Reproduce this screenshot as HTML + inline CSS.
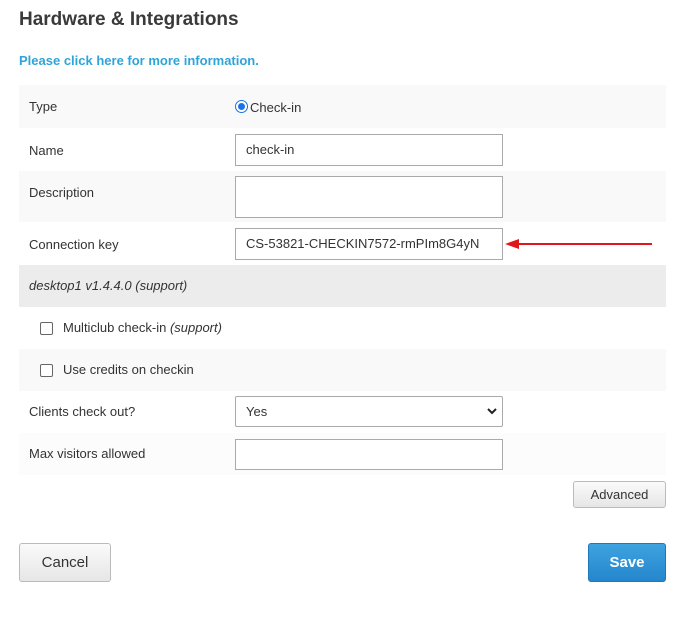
<!DOCTYPE html>
<html><head><style>
body{margin:0;background:#fff;font-family:"Liberation Sans",sans-serif;color:#333;width:689px;height:618px;position:relative;overflow:hidden}
.a{position:absolute}
h1{position:absolute;left:19px;top:9px;margin:0;font-size:19px;font-weight:bold;color:#3a3a3a}
.link{left:19px;top:53px;font-size:13px;font-weight:bold;color:#2fa4d9}
.row{position:absolute;left:19px;width:647px}
.lbl{position:absolute;left:10px;font-size:13px;color:#333}
.inp{position:absolute;left:216px;width:268px;border:1px solid #aaa;background:#fff;box-sizing:border-box;font-size:13px;padding-left:10px;color:#333}
.cb{position:absolute;left:21px;width:11px;height:11px;border:1px solid #666;border-radius:2px;background:#fff}
.btn{position:absolute;border:1px solid #bbb;border-radius:3px;background:linear-gradient(#fafafa,#e6e6e6);font-size:14px;text-align:center;box-sizing:border-box;color:#333}
</style></head><body>
<h1>Hardware &amp; Integrations</h1>
<div class="a link">Please click here for more information.</div>

<div class="row" style="top:85px;height:43px;background:#f9f9f9">
 <div class="lbl" style="top:14px">Type</div>
 <div class="a" style="left:216px;top:15px;width:11px;height:11px;border:1px solid #1a73e8;border-radius:50%;background:#fff"><div class="a" style="left:2px;top:2px;width:7px;height:7px;border-radius:50%;background:#1a73e8"></div></div>
 <div class="a" style="left:231px;top:15px;font-size:13px">Check-in</div>
</div>
<div class="row" style="top:128px;height:43px">
 <div class="lbl" style="top:15px">Name</div>
 <div class="inp" style="top:6px;height:32px;line-height:30px">check-in</div>
</div>
<div class="row" style="top:171px;height:51px;background:#f9f9f9">
 <div class="lbl" style="top:14px">Description</div>
 <div class="inp" style="top:5px;height:42px"></div>
</div>
<div class="row" style="top:222px;height:43px">
 <div class="lbl" style="top:15px">Connection key</div>
 <div class="inp" style="top:6px;height:32px;line-height:30px;overflow:hidden;white-space:nowrap">CS-53821-CHECKIN7572-rmPIm8G4yN</div>
 <div class="a" style="left:498px;top:21px;width:135px;height:2px;background:#e0161a"></div>
 <div class="a" style="left:486px;top:17px;width:0;height:0;border-top:5px solid transparent;border-bottom:5px solid transparent;border-right:14px solid #e0161a"></div>
</div>
<div class="row" style="top:265px;height:42px;background:#ececec">
 <div class="lbl" style="top:13px;font-style:italic">desktop1 v1.4.4.0 (support)</div>
</div>
<div class="row" style="top:307px;height:42px">
 <div class="cb" style="top:15px"></div>
 <div class="lbl" style="left:44px;top:13px">Multiclub check-in <i>(support)</i></div>
</div>
<div class="row" style="top:349px;height:42px;background:#f9f9f9">
 <div class="cb" style="top:15px"></div>
 <div class="lbl" style="left:44px;top:13px">Use credits on checkin</div>
</div>
<div class="row" style="top:391px;height:42px">
 <div class="lbl" style="top:13px">Clients check out?</div>
 <div class="inp" style="top:5px;height:31px;line-height:29px;border-radius:2px">Yes
  <svg class="a" style="right:5px;top:11px" width="10" height="7" viewBox="0 0 10 7"><path d="M1 1l4 4 4-4" stroke="#222" stroke-width="2" fill="none"/></svg></div>
</div>
<div class="row" style="top:433px;height:42px;background:#fcfcfc">
 <div class="lbl" style="top:13px">Max visitors allowed</div>
 <div class="inp" style="top:6px;height:31px"></div>
</div>
<div class="btn" style="left:573px;top:481px;width:93px;height:27px;line-height:25px;font-size:13px">Advanced</div>
<div class="btn" style="left:19px;top:543px;width:92px;height:39px;line-height:37px;font-size:15px">Cancel</div>
<div class="btn" style="left:588px;top:543px;width:78px;height:39px;line-height:37px;font-size:15px;font-weight:bold;color:#fff;background:linear-gradient(#3ea3e0,#2586cc);border-color:#2277b8">Save</div>
</body></html>
